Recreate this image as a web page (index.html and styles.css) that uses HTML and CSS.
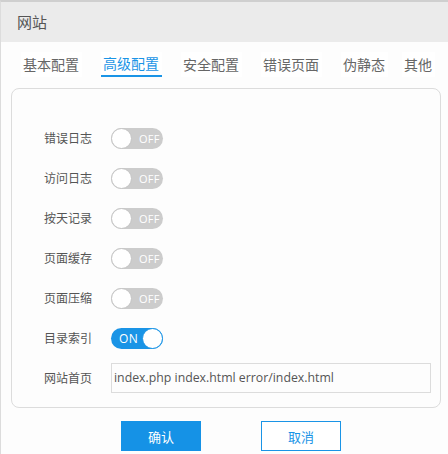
FILE: index.html
```html
<!DOCTYPE html>
<html>
<head>
<meta charset="utf-8">
<link rel="stylesheet" href="styles.css">
</head>
<body>
<div class="dialog">
  <div class="header">网站</div>
  <div class="tabs">
    <span class="tab">基本配置</span>
    <span class="tab active">高级配置</span>
    <span class="tab">安全配置</span>
    <span class="tab">错误页面</span>
    <span class="tab short">伪静态</span>
    <span class="tab last">其他</span>
  </div>
  <div class="panel">
    <div class="row"><span class="label">错误日志</span><span class="switch"><span class="knob"></span><span class="stxt">OFF</span></span></div>
    <div class="row"><span class="label">访问日志</span><span class="switch"><span class="knob"></span><span class="stxt">OFF</span></span></div>
    <div class="row"><span class="label">按天记录</span><span class="switch"><span class="knob"></span><span class="stxt">OFF</span></span></div>
    <div class="row"><span class="label">页面缓存</span><span class="switch"><span class="knob"></span><span class="stxt">OFF</span></span></div>
    <div class="row"><span class="label">页面压缩</span><span class="switch"><span class="knob"></span><span class="stxt">OFF</span></span></div>
    <div class="row"><span class="label">目录索引</span><span class="switch on"><span class="stxt">ON</span><span class="knob"></span></span></div>
    <div class="row"><span class="label">网站首页</span><div class="input">index.php index.html error/index.html</div></div>
  </div>
  <div class="footer">
    <button class="btn primary">确认</button>
    <button class="btn">取消</button>
  </div>
</div>
</body>
</html>
```
FILE: styles.css
```css
html, body {
  margin: 0;
  padding: 0;
  background: #fdfdfd;
}
body {
  font-family: "Noto Sans", "Noto Sans CJK SC", sans-serif;
  color: #555;
}
.dialog {
  width: 447px;
  height: 452px;
  border-top: 2px solid #cfcfcf;
  border-left: 1px solid #dcdcdc;
  background: #fdfdfd;
}
.header {
  height: 40px;
  line-height: 40px;
  background: #ebebeb;
  padding-left: 16px;
  font-size: 15px;
  color: #555;
}
.tabs {
  display: flex;
  margin-top: 10px;
  padding-left: 20px;
  height: 25px;
}
.tab {
  display: block;
  flex-shrink: 0;
  white-space: nowrap;
  height: 25px;
  line-height: 25px;
  padding: 0 3px 0 2px;
  margin-right: 19px;
  font-size: 14px;
  color: #666;
  background: #fff;
  box-sizing: border-box;
}
.tab.active {
  color: #1a94e6;
  border-bottom: 2px solid #1a94e6;
  line-height: 24px;
}
.tab.short { margin-right: 14px; }
.tab.last { margin-right: 0; }
.panel {
  margin: 11px 0 0 10px;
  width: 430px;
  height: 320px;
  box-sizing: border-box;
  border: 1px solid #dcdcdc;
  border-radius: 8px;
  padding: 29px 0 0 32px;
}
.row {
  display: flex;
  align-items: center;
  height: 40px;
}
.label {
  width: 67px;
  font-size: 12px;
  color: #555;
}
.switch {
  display: flex;
  align-items: center;
  width: 52px;
  height: 21px;
  box-sizing: border-box;
  border-radius: 11px;
  background: #cccccc;
}
.knob {
  width: 21px;
  height: 21px;
  box-sizing: border-box;
  border-radius: 50%;
  background: #fff;
  border: 1px solid #c4c4c4;
}
.stxt {
  font-family: "Open Sans", "Noto Sans", sans-serif;
  font-size: 11px;
  color: #fff;
  margin-left: 7px;
  letter-spacing: 0.3px;
}
.switch.on {
  background: #1a94e6;
  justify-content: space-between;
}
.switch.on .stxt {
  margin-left: 8px;
  font-size: 12px;
}
.switch.on .knob {
  border-color: #1a94e6;
}
.input {
  width: 320px;
  height: 30px;
  box-sizing: border-box;
  border: 1px solid #dcdcdc;
  line-height: 28px;
  padding-left: 2px;
  font-family: "Open Sans", "Noto Sans", sans-serif;
  font-size: 12.3px;
  color: #555;
  background: #fdfdfd;
}
.footer {
  display: flex;
  gap: 60px;
  padding: 13px 0 0 120px;
}
.btn {
  width: 80px;
  height: 30px;
  box-sizing: border-box;
  border: 1px solid #1a94e6;
  background: #fff;
  color: #1a94e6;
  font-family: "Noto Sans CJK SC", sans-serif;
  font-size: 13px;
  padding: 0;
}
.btn.primary {
  background: #1592e6;
  border-color: #1592e6;
  color: #fff;
}
```
